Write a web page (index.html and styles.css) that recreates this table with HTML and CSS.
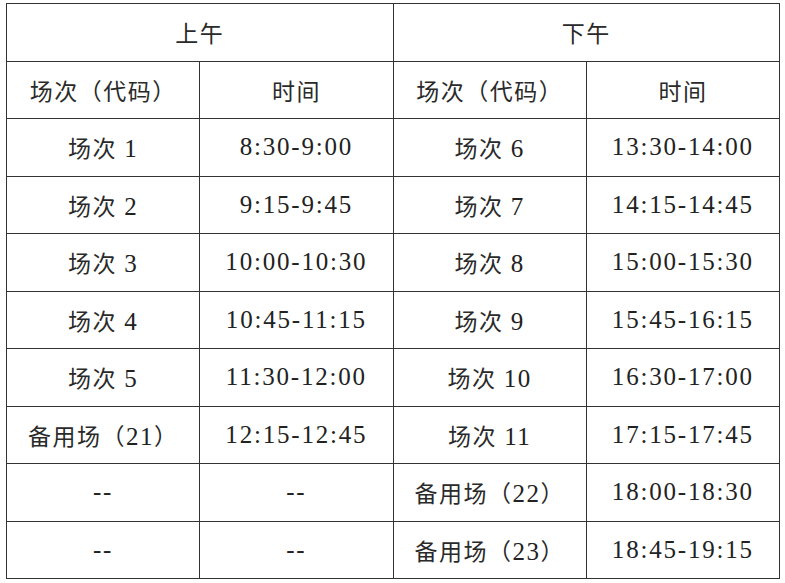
FILE: index.html
```html
<!DOCTYPE html>
<html lang="zh-CN">
<head>
<meta charset="utf-8">
<link rel="stylesheet" href="styles.css">
</head>
<body>
<div class="page">
<table class="schedule">
  <colgroup><col><col><col><col></colgroup>
  <tr><td colspan="2">上午</td><td colspan="2">下午</td></tr>
  <tr><td>场次（代码）</td><td>时间</td><td>场次（代码）</td><td>时间</td></tr>
  <tr><td>场次 <span class="num">1</span></td><td class="time">8:30-9:00</td><td>场次 <span class="num">6</span></td><td class="time">13:30-14:00</td></tr>
  <tr><td>场次 <span class="num">2</span></td><td class="time">9:15-9:45</td><td>场次 <span class="num">7</span></td><td class="time">14:15-14:45</td></tr>
  <tr><td>场次 <span class="num">3</span></td><td class="time">10:00-10:30</td><td>场次 <span class="num">8</span></td><td class="time">15:00-15:30</td></tr>
  <tr><td>场次 <span class="num">4</span></td><td class="time">10:45-11:15</td><td>场次 <span class="num">9</span></td><td class="time">15:45-16:15</td></tr>
  <tr><td>场次 <span class="num">5</span></td><td class="time">11:30-12:00</td><td>场次 <span class="num">10</span></td><td class="time">16:30-17:00</td></tr>
  <tr><td>备用场（<span class="num">21</span>）</td><td class="time">12:15-12:45</td><td>场次 <span class="num">11</span></td><td class="time">17:15-17:45</td></tr>
  <tr><td class="time">--</td><td class="time">--</td><td>备用场（<span class="num">22</span>）</td><td class="time">18:00-18:30</td></tr>
  <tr><td class="time">--</td><td class="time">--</td><td>备用场（<span class="num">23</span>）</td><td class="time">18:45-19:15</td></tr>
</table>
</div>
</body>
</html>
```

FILE: styles.css
```css
html, body {
  margin: 0;
  padding: 0;
  background: #ffffff;
}
.page {
  padding: 3px 0 0 6px;
}
.schedule {
  border-collapse: collapse;
  table-layout: fixed;
  width: 774px;
  font-family: "Liberation Serif", "Noto Sans CJK SC", serif;
  font-size: 23px;
  color: #2a2a2a;
}
.schedule td {
  border: 1.3px solid #333333;
  height: 57.5px;
  padding: 0;
  text-align: center;
  vertical-align: middle;
  letter-spacing: 1.5px;
  white-space: nowrap;
  box-sizing: border-box;
}
.schedule td.time {
  font-size: 25px;
  letter-spacing: 1.8px;
  color: #222222;
}
.num {
  font-size: 25px;
  letter-spacing: 1.5px;
  color: #222222;
}
```
